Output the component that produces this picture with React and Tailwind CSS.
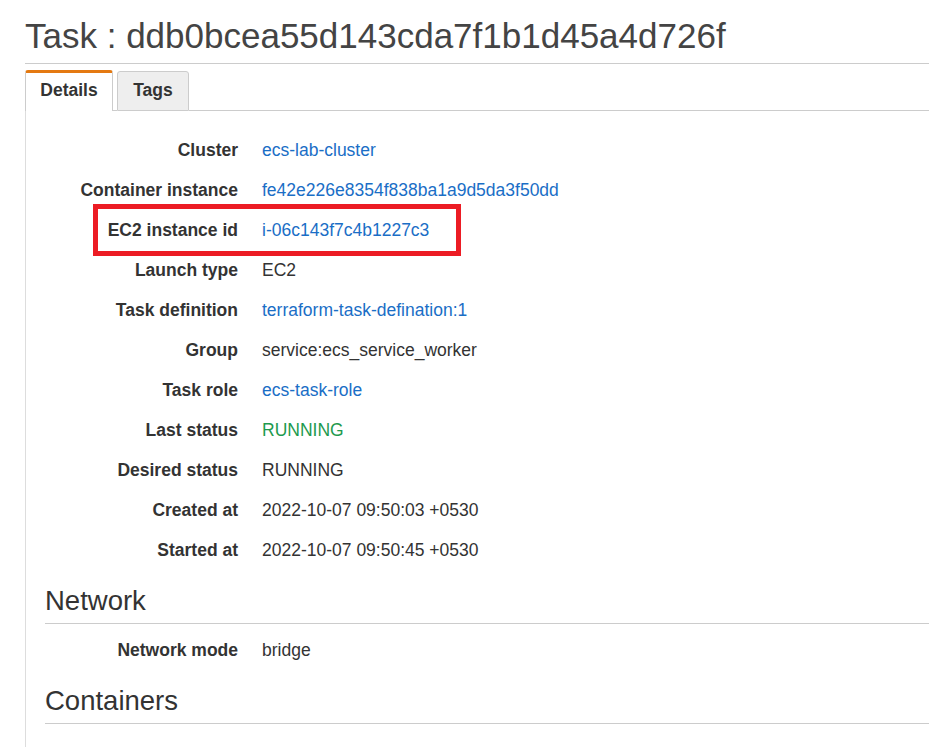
import React from 'react';

const rows = [
  { label: 'Cluster', value: 'ecs-lab-cluster', kind: 'link' },
  { label: 'Container instance', value: 'fe42e226e8354f838ba1a9d5da3f50dd', kind: 'link' },
  { label: 'EC2 instance id', value: 'i-06c143f7c4b1227c3', kind: 'link', marked: true },
  { label: 'Launch type', value: 'EC2' },
  { label: 'Task definition', value: 'terraform-task-defination:1', kind: 'link' },
  { label: 'Group', value: 'service:ecs_service_worker' },
  { label: 'Task role', value: 'ecs-task-role', kind: 'link' },
  { label: 'Last status', value: 'RUNNING', kind: 'ok' },
  { label: 'Desired status', value: 'RUNNING' },
  { label: 'Created at', value: '2022-10-07 09:50:03 +0530' },
  { label: 'Started at', value: '2022-10-07 09:50:45 +0530' },
];

const valueColor = {
  link: 'text-[#1a6ec6]',
  ok: 'text-[#1e9a4e]',
};

const Row = ({ label, value, kind, marked }) => (
  <div className="relative grid grid-cols-[212px_1fr] gap-x-[24px] h-[40px] leading-[40px]">
    <div className="text-right font-bold text-[#333]">{label}</div>
    <div className={valueColor[kind] || 'text-[#333]'}>{value}</div>
    {marked && (
      <div className="absolute left-[67px] top-[-6px] w-[368px] h-[52px] border-[5px] border-[#ec1c24]" />
    )}
  </div>
);

const Section = ({ title }) => (
  <div className="ml-[19px] mt-[15px] border-b border-[#ccc] pb-[6px]">
    <h2 className="text-[27.5px] leading-[32px] text-[#333]">{title}</h2>
  </div>
);

export default function App() {
  return (
    <div
      className="min-h-[747px] overflow-hidden bg-white pl-[25px] pt-[16px] text-[17.5px] text-[#333]"
      style={{ fontFamily: '"Liberation Sans", Arial, sans-serif' }}
    >
      <h1 className="border-b border-[#ccc] pb-[7px] text-[35px] leading-[40px] text-[#444] whitespace-nowrap">
        Task : ddb0bcea55d143cda7f1b1d45a4d726f
      </h1>

      {/* tabs */}
      <div className="mt-[6px] flex items-end font-bold">
        <div className="h-[41px] w-[88px] rounded-t-[3px] border-x border-t-[3px] border-x-[#ccc] border-t-[#e47911] bg-white pb-[4px] text-center leading-[34px] text-[#333]">
          Details
        </div>
        <div className="h-[40px] w-[4px] border-b border-[#ccc]" />
        <div className="h-[40px] w-[72px] rounded-t-[3px] border border-[#ccc] bg-[#eee] text-center leading-[36px] text-[#333]">
          Tags
        </div>
        <div className="h-[40px] flex-1 border-b border-[#ccc]" />
      </div>

      {/* panel */}
      <div className="min-h-[636px] border-l border-[#ddd] pt-[19px]">
        {rows.map((r) => (
          <Row key={r.label} {...r} />
        ))}

        <Section title="Network" />
        <div className="mt-[6px]">
          <Row label="Network mode" value="bridge" />
        </div>

        <Section title="Containers" />
      </div>
    </div>
  );
}
